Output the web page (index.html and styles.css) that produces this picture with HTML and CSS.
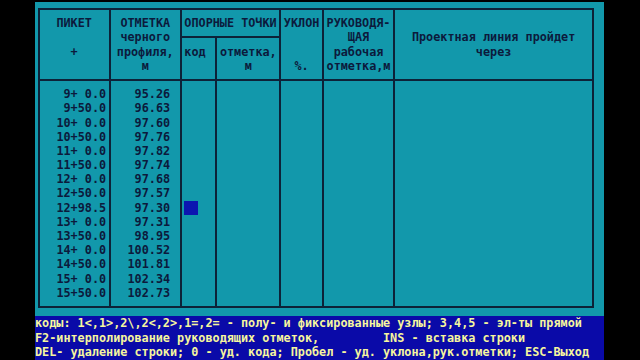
FILE: index.html
```html
<!DOCTYPE html>
<html lang="ru">
<head>
<meta charset="utf-8">
<title>Проектная линия</title>
<link rel="stylesheet" href="styles.css">
</head>
<body>
<div class="screen">
  <div class="grid">
    <div class="cell h c-piket">ПИКЕТ<br>&nbsp;<br>+</div>
    <div class="cell h c-otm">ОТМЕТКА<br>черного<br>профиля,<br>м</div>
    <div class="cell h c-opor">ОПОРНЫЕ ТОЧКИ</div>
    <div class="cell h c-uklon">УКЛОН<br>&nbsp;<br>&nbsp;<br>%.</div>
    <div class="cell h c-ruk">РУКОВОДЯ-<br>ЩАЯ<br>рабочая<br>отметка,м</div>
    <div class="cell h c-proj">&nbsp;<br>Проектная линия пройдет<br>через</div>
    <div class="cell h c-kod">код</div>
    <div class="cell h c-otm2">отметка,<br>м</div>

    <div class="cell b b-piket">
      <div class="ln">9+ 0.0</div><div class="ln">9+50.0</div><div class="ln">10+ 0.0</div><div class="ln">10+50.0</div><div class="ln">11+ 0.0</div><div class="ln">11+50.0</div><div class="ln">12+ 0.0</div><div class="ln">12+50.0</div><div class="ln">12+98.5</div><div class="ln">13+ 0.0</div><div class="ln">13+50.0</div><div class="ln">14+ 0.0</div><div class="ln">14+50.0</div><div class="ln">15+ 0.0</div><div class="ln">15+50.0</div>
    </div>
    <div class="cell b b-val">
      <div class="ln">95.26</div><div class="ln">96.63</div><div class="ln">97.60</div><div class="ln">97.76</div><div class="ln">97.82</div><div class="ln">97.74</div><div class="ln">97.68</div><div class="ln">97.57</div><div class="ln">97.30</div><div class="ln">97.31</div><div class="ln">98.95</div><div class="ln">100.52</div><div class="ln">101.81</div><div class="ln">102.34</div><div class="ln">102.73</div>
    </div>
    <div class="cell b b-kod"><div class="cursor-row"><span class="cursor"></span></div></div>
    <div class="cell b"></div>
    <div class="cell b"></div>
    <div class="cell b"></div>
    <div class="cell b"></div>
  </div>
  <div class="status">коды: 1&lt;,1&gt;,2\,2&lt;,2&gt;,1=,2= - полу- и фиксированные узлы; 3,4,5 - эл-ты прямой
F2-интерполирование руководящих отметок,         INS - вставка строки
DEL- удаление строки; 0 - уд. кода; Пробел - уд. уклона,рук.отметки; ESC-Выход</div>
</div>
</body>
</html>
```

FILE: styles.css
```css
html, body {
  margin: 0;
  padding: 0;
  background: #000;
}

body {
  width: 640px;
  height: 360px;
  overflow: hidden;
}

.screen {
  margin-left: 35px;
  margin-top: 2px;
  width: 569px;
  height: 358px;
  background: #1298ab;
  display: flex;
  flex-direction: column;
  font-family: "DejaVu Sans Mono", "Liberation Mono", monospace;
  font-weight: bold;
  font-size: 11.8px;
  line-height: 14.2px;
  color: #0c1a3c;
}

.grid {
  margin-top: 6.1px;
  margin-left: 2.6px;
  width: 556.6px;
  box-sizing: border-box;
  padding: 2px;
  gap: 2px;
  background: #0d2238;
  display: grid;
  grid-template-columns: 69.1px 69.1px 33.6px 61.9px 40.7px 69.1px 197.1px;
  grid-template-rows: 26.4px 40.6px 225.2px;
}

.cell {
  background: #1298ab;
  white-space: nowrap;
}

.h {
  text-align: center;
  padding-top: 6.1px;
}

.c-piket { grid-column: 1; grid-row: 1 / 3; }
.c-otm { grid-column: 2; grid-row: 1 / 3; }
.c-opor { grid-column: 3 / 5; grid-row: 1; }
.c-uklon { grid-column: 5; grid-row: 1 / 3; }
.c-ruk { grid-column: 6; grid-row: 1 / 3; }
.c-proj { grid-column: 7; grid-row: 1 / 3; }
.c-kod { grid-column: 3; grid-row: 2; text-align: left; padding-left: 2.5px; }
.c-otm2 { grid-column: 4; grid-row: 2; }

.b {
  padding-top: 6.1px;
}

.ln {
  white-space: pre;
  height: 14.2px;
}

.b-piket {
  text-align: right;
  padding-right: 2.6px;
}

.b-val {
  text-align: right;
  padding-right: 9.7px;
}

.b-kod {
  padding-left: 2.5px;
}

.cursor-row {
  margin-top: 113.6px;
  height: 14.2px;
}

.cursor {
  display: block;
  width: 14.2px;
  height: 14.2px;
  background: #0c16b0;
}

.status {
  margin-top: auto;
  height: 43.6px;
  background: #0a0aa8;
  color: #f6f69e;
  white-space: pre;
  line-height: 14.2px;
}
```
